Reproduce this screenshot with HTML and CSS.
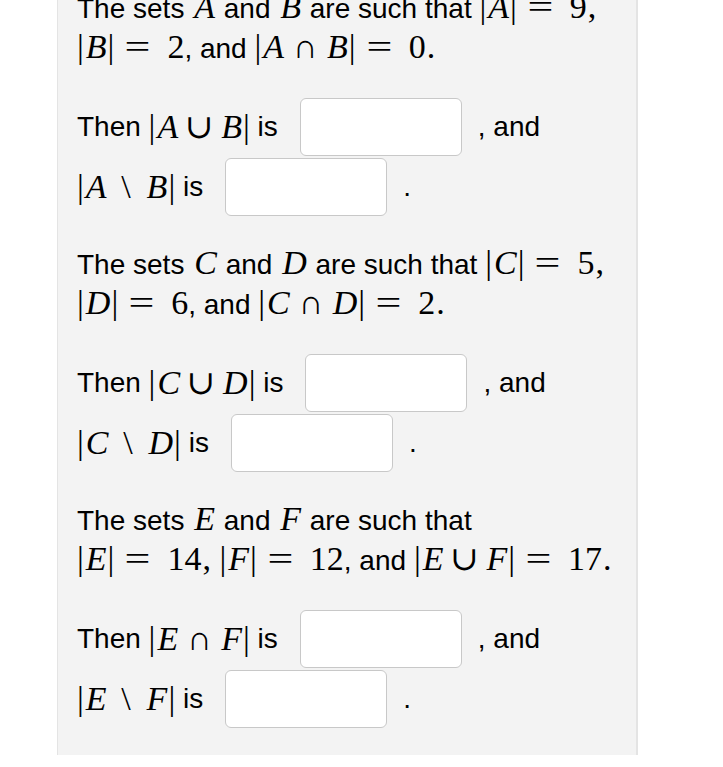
FILE: index.html
```html
<!DOCTYPE html>
<html>
<head>
<meta charset="utf-8">
<link rel="stylesheet" href="styles.css">
</head>
<body>
<div class="panel">
  <section class="q">
    <p class="stmt">The sets <span class="m"><i>A</i></span> and <span class="m"><i>B</i></span> are such that <span class="m">|<i>A</i>|<span class="rel">=</span>9<span class="pn">,</span></span><br><span class="m">|<i>B</i>|<span class="rel">=</span>2</span>, and <span class="m">|<i>A</i><span class="bin">∩</span><i>B</i>|<span class="rel">=</span>0<span class="pn">.</span></span></p>
    <div class="rows">
      <div class="row">Then <span class="m">|<i>A</i><span class="bin">∪</span><i>B</i>|</span> is<span class="box"></span><span class="after">, and</span></div>
      <div class="row"><span class="m">|<i>A</i><span class="bin sm">\</span><i>B</i>|</span> is<span class="box"></span><span class="after">.</span></div>
    </div>
  </section>
  <section class="q">
    <p class="stmt">The sets <span class="m"><i>C</i></span> and <span class="m"><i>D</i></span> are such that <span class="m">|<i>C</i>|<span class="rel">=</span>5<span class="pn">,</span></span><br><span class="m">|<i>D</i>|<span class="rel">=</span>6</span>, and <span class="m">|<i>C</i><span class="bin">∩</span><i>D</i>|<span class="rel">=</span>2<span class="pn">.</span></span></p>
    <div class="rows">
      <div class="row">Then <span class="m">|<i>C</i><span class="bin">∪</span><i>D</i>|</span> is<span class="box"></span><span class="after">, and</span></div>
      <div class="row"><span class="m">|<i>C</i><span class="bin sm">\</span><i>D</i>|</span> is<span class="box"></span><span class="after">.</span></div>
    </div>
  </section>
  <section class="q">
    <p class="stmt">The sets <span class="m"><i>E</i></span> and <span class="m"><i>F</i></span> are such that<br><span class="m">|<i>E</i>|<span class="rel">=</span>14<span class="pn">,</span> |<i>F</i>|<span class="rel">=</span>12</span>, and <span class="m">|<i>E</i><span class="bin">∪</span><i>F</i>|<span class="rel">=</span>17<span class="pn">.</span></span></p>
    <div class="rows">
      <div class="row">Then <span class="m">|<i>E</i><span class="bin">∩</span><i>F</i>|</span> is<span class="box"></span><span class="after">, and</span></div>
      <div class="row"><span class="m">|<i>E</i><span class="bin sm">\</span><i>F</i>|</span> is<span class="box"></span><span class="after">.</span></div>
    </div>
  </section>
</div>
</body>
</html>
```

FILE: styles.css
```css
html, body {
  margin: 0;
  padding: 0;
  background: #ffffff;
}
body {
  font-family: "Liberation Sans", Arial, Helvetica, sans-serif;
  font-size: 28px;
  color: #000;
}
.panel {
  margin-left: 57px;
  width: 581px;
  box-sizing: border-box;
  margin-top: -11px;
  padding: 0 0 26px 19px;
  background: #f3f3f3;
  border-left: 1px solid #e4e4e4;
  border-right: 2px solid #e4e4e4;
}
.q {
  margin: 0 0 28px 0;
}
.q:last-child {
  margin-bottom: 0;
}
.stmt {
  margin: 0;
  line-height: 40px;
  white-space: nowrap;
}
.rows {
  margin-top: 28px;
}
.row {
  height: 60px;
  display: flex;
  align-items: center;
  white-space: pre;
}
.m {
  font-family: "Liberation Serif", "DejaVu Serif", serif;
  font-size: 34px;
  line-height: 1;
  white-space: nowrap;
}
.m i {
  font-style: italic;
  padding: 0 1px 0 2px;
}
.rel {
  display: inline-block;
  width: 41px;
  padding: 0 9px 0 3px;
  text-align: center;
  transform: scaleX(1.35);
  transform-origin: 23.5px 50%;
}
.bin {
  display: inline-block;
  width: 40px;
  text-align: center;
}
.bin.sm {
  width: 37px;
}
.pn {
  margin-left: 1px;
}
.box {
  display: inline-block;
  width: 162px;
  height: 58px;
  box-sizing: border-box;
  margin-left: 22px;
  border: 1px solid #c8c8c8;
  border-radius: 6px;
  background: #fff;
}
.after {
  margin-left: 16px;
}
```
